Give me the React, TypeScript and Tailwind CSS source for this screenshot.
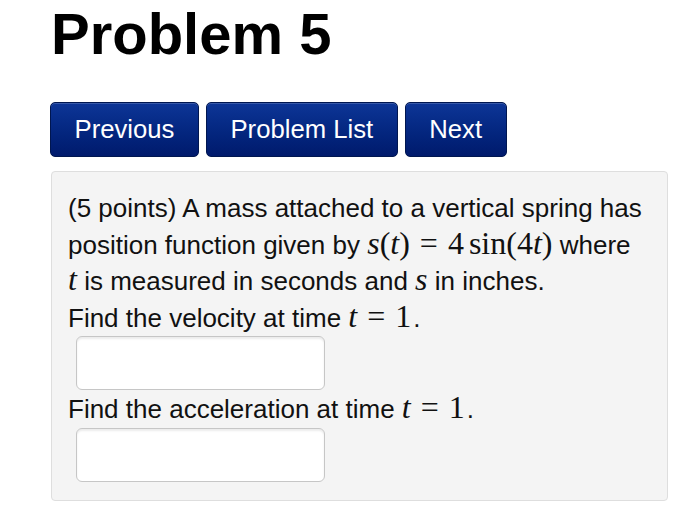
import React from "react";

const sans = "font-['Liberation_Sans',Arial,sans-serif]";
const serif = "font-['Liberation_Serif','Times_New_Roman',serif]";

function M({ children }: { children: React.ReactNode }) {
  return <span className={`${serif} text-[32px] leading-none`}>{children}</span>;
}

function I({ children }: { children: React.ReactNode }) {
  return <span className="italic">{children}</span>;
}

function Eq() {
  return <span className="mx-[10px]">=</span>;
}

function NavButton({ label }: { label: string }) {
  return (
    <button className="h-[55px] px-[23.5px] rounded-[5px] border border-[#001650] bg-gradient-to-b from-[#0d3597] to-[#001a6c] text-white text-[25.7px] leading-none shadow-[inset_0_1px_0_rgba(255,255,255,0.18)]">
      {label}
    </button>
  );
}

function AnswerBox() {
  return (
    <input
      type="text"
      className="block ml-[8px] w-[249px] h-[54px] bg-white border border-[#c6c6c6] rounded-[6px] shadow-[inset_0_2px_2px_rgba(0,0,0,0.08)] outline-none"
    />
  );
}

export default function App() {
  return (
    <div className={`${sans} w-[700px] h-[523px] bg-white text-[#111] pl-[51px] pt-[5px]`}>
      <h1 className="text-[58px] font-bold leading-none text-black">Problem 5</h1>

      <div className="flex gap-[7px] mt-[39px] -ml-[1px]">
        <NavButton label="Previous" />
        <NavButton label="Problem List" />
        <NavButton label="Next" />
      </div>

      <div className="mt-[14px] w-[617px] h-[330px] bg-[#f4f4f4] border border-[#dedede] rounded-[4px] pl-[16px] pt-[18px] text-[26px] leading-[36.5px]">
        <div>(5 points) A mass attached to a vertical spring has</div>
        <div>
          position function given by{" "}
          <M>
            <I>s</I>(<I>t</I>)<Eq />4<span className="ml-[5px]">sin</span>(4<I>t</I>)
          </M>{" "}
          where
        </div>
        <div>
          <M>
            <I>t</I>
          </M>{" "}
          is measured in seconds and{" "}
          <M>
            <I>s</I>
          </M>{" "}
          in inches.
        </div>
        <div>
          Find the velocity at time{" "}
          <M>
            <I>t</I>
            <Eq />1
          </M>
          <span className="ml-[2px]">.</span>
        </div>
        <div>
          <AnswerBox />
        </div>
        <div className="mt-[1px]">
          Find the acceleration at time{" "}
          <M>
            <I>t</I>
            <Eq />1
          </M>
          <span className="ml-[2px]">.</span>
        </div>
        <div>
          <AnswerBox />
        </div>
      </div>
    </div>
  );
}
